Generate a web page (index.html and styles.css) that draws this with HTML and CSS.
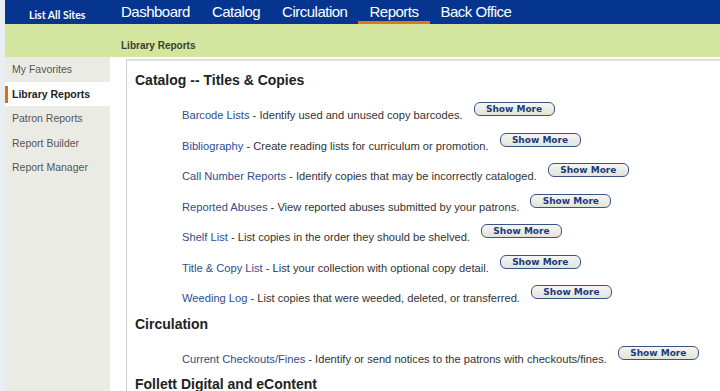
FILE: index.html
```html
<!DOCTYPE html>
<html lang="en">
<head>
<meta charset="utf-8">
<title>Library Reports</title>
<link rel="stylesheet" href="styles.css">
</head>
<body>
<div class="page">
  <header class="topbar">
    <div class="sites">List All Sites</div>
    <nav class="nav">
      <a class="nav-item">Dashboard</a>
      <a class="nav-item">Catalog</a>
      <a class="nav-item">Circulation</a>
      <a class="nav-item active">Reports</a>
      <a class="nav-item">Back Office</a>
    </nav>
  </header>
  <div class="subbar">Library Reports</div>
  <div class="main">
    <aside class="sidebar">
      <div class="side-item">My Favorites</div>
      <div class="side-item selected">Library Reports</div>
      <div class="side-item">Patron Reports</div>
      <div class="side-item">Report Builder</div>
      <div class="side-item">Report Manager</div>
    </aside>
    <section class="content">
      <h2 class="heading">Catalog -- Titles &amp; Copies</h2>
      <div class="row"><span class="text"><a class="link">Barcode Lists</a> - Identify used and unused copy barcodes.</span><button class="more">Show More</button></div>
      <div class="row"><span class="text"><a class="link">Bibliography</a> - Create reading lists for curriculum or promotion.</span><button class="more">Show More</button></div>
      <div class="row"><span class="text"><a class="link">Call Number Reports</a> - Identify copies that may be incorrectly cataloged.</span><button class="more">Show More</button></div>
      <div class="row"><span class="text"><a class="link">Reported Abuses</a> - View reported abuses submitted by your patrons.</span><button class="more">Show More</button></div>
      <div class="row"><span class="text"><a class="link">Shelf List</a> - List copies in the order they should be shelved.</span><button class="more">Show More</button></div>
      <div class="row"><span class="text"><a class="link">Title &amp; Copy List</a> - List your collection with optional copy detail.</span><button class="more">Show More</button></div>
      <div class="row"><span class="text"><a class="link">Weeding Log</a> - List copies that were weeded, deleted, or transferred.</span><button class="more">Show More</button></div>
      <h2 class="heading">Circulation</h2>
      <div class="row"><span class="text"><a class="link">Current Checkouts/Fines</a> - Identify or send notices to the patrons with checkouts/fines.</span><button class="more">Show More</button></div>
      <h2 class="heading">Follett Digital and eContent</h2>
    </section>
  </div>
</div>
</body>
</html>
```
FILE: styles.css
```css
html, body {
  margin: 0;
  padding: 0;
  height: 100%;
  overflow: hidden;
}
body {
  background: #e9eef3;
  font-family: "Liberation Sans", Arial, sans-serif;
}
.page {
  margin-left: 5px;
  background: #ffffff;
  height: 100%;
  overflow: hidden;
}
.topbar {
  height: 24px;
  background: #06358f;
  display: flex;
  align-items: stretch;
}
.sites {
  width: 105px;
  box-sizing: border-box;
  padding-left: 24px;
  color: #ffffff;
  font-family: Lato, "Liberation Sans", sans-serif;
  font-weight: 700;
  font-size: 10.5px;
  display: flex;
  align-items: center;
  padding-top: 5px;
}
.nav {
  display: flex;
  align-items: stretch;
}
.nav-item {
  color: #ffffff;
  font-size: 15px;
  letter-spacing: -0.5px;
  padding: 2px 11px 0 11px;
  display: flex;
  align-items: center;
  box-sizing: border-box;
  border-bottom: 3px solid transparent;
}
.nav-item.active {
  border-bottom-color: #e5760f;
}
.subbar {
  height: 33px;
  background: #d3e59f;
  box-sizing: border-box;
  padding-left: 116px;
  padding-top: 16px;
  font-size: 10px;
  font-weight: 700;
  color: #3a3f33;
}
.main {
  display: flex;
  align-items: stretch;
  height: 334px;
  overflow: hidden;
}
.sidebar {
  width: 105px;
  flex: none;
  background: #ebebe5;
}
.side-item {
  height: 24.5px;
  line-height: 24.5px;
  padding-left: 7px;
  font-size: 10.5px;
  color: #555555;
  position: relative;
}
.side-item.selected {
  background: #ffffff;
  color: #222222;
  font-weight: 700;
}
.side-item.selected::before {
  content: "";
  position: absolute;
  left: 0;
  top: 4px;
  bottom: 3px;
  width: 3px;
  background: #e06c10;
}
.content {
  flex: 1;
  margin-left: 16px;
  margin-top: 2px;
  border-top: 2px solid #dedede;
  border-left: 1px solid #cfcfcf;
  padding-top: 11px;
  padding-left: 8px;
  overflow: hidden;
}
.heading {
  margin: 0 0 5px 0;
  font-size: 14px;
  line-height: 17px;
  font-weight: 700;
  color: #222222;
}
.row + .heading {
  margin-top: 8px;
}
.row {
  height: 30.5px;
  display: flex;
  align-items: flex-start;
  padding-left: 47px;
  box-sizing: border-box;
}
.text {
  padding-top: 14px;
  font-size: 11.15px;
  line-height: 14px;
  color: #333333;
  white-space: nowrap;
}
.link {
  color: #2d4f8e;
}
.more {
  margin-top: 8px;
  margin-left: 11px;
  width: 81px;
  height: 14px;
  box-sizing: border-box;
  padding: 0;
  border: 1px solid #3a5486;
  border-radius: 6px;
  background: linear-gradient(#f6f6f2, #e3e3dc);
  color: #1b3b7b;
  font-family: "DejaVu Sans", Verdana, sans-serif;
  font-weight: 700;
  font-size: 9px;
  line-height: 12px;
  flex: none;
}
```
